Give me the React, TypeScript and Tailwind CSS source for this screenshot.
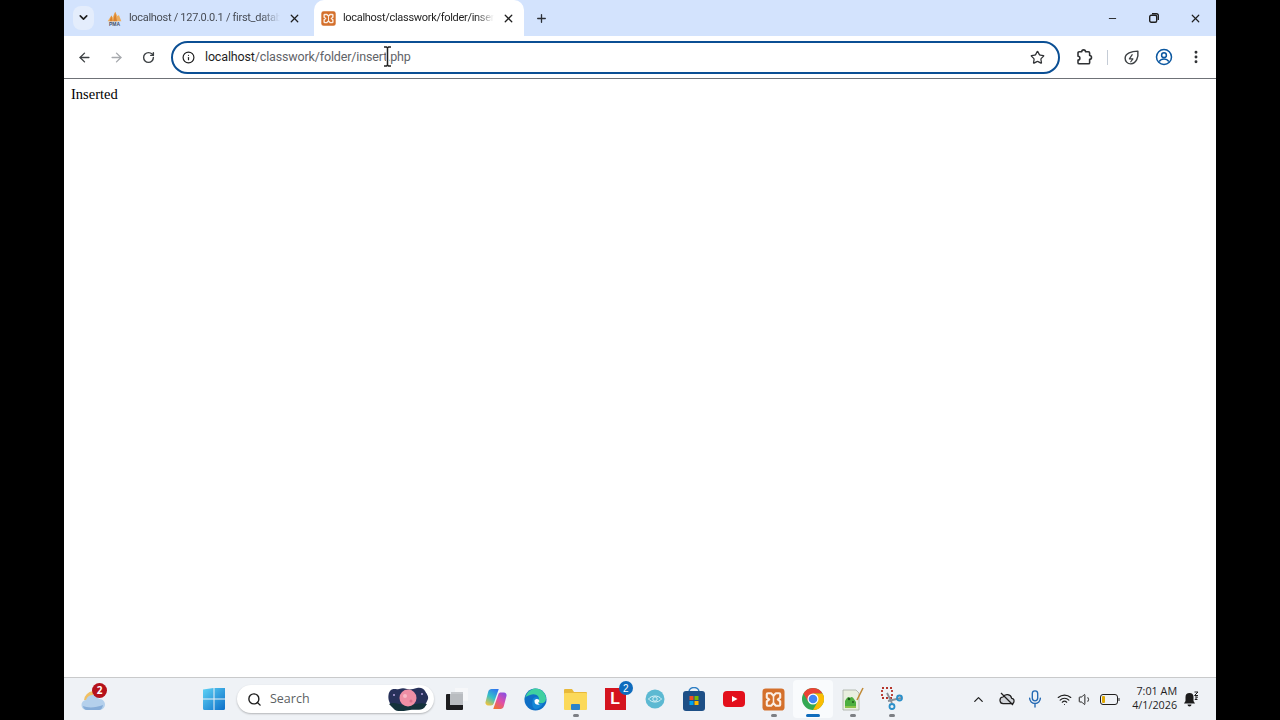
import { ArrowLeft, ArrowRight, ChevronDown, ChevronUp, Info, Minus, MoreVertical, Plus, RotateCw, Search, Star, Volume1, Wifi, X } from 'lucide-react';
import type { ReactNode } from 'react';

const sans = 'font-["Open_Sans","Noto_Sans",sans-serif]';

function XamppIcon({ size = 15 }: { size?: number }) {
  return (
    <svg width={size} height={size} viewBox="0 0 24 24">
      <rect x="0.500" y="0.500" width="23" height="23" rx="3.500" fill="#d4702c" />
      <path d="M6 5.500h3.500L12 8l2.500-2.500H18a1 1 0 0 1 1 1V10l-2.500 2 2.500 2v3.500a1 1 0 0 1-1 1h-3.500L12 16l-2.500 2.500H6a1 1 0 0 1-1-1V14l2.500-2L5 10V6.500a1 1 0 0 1 1-1z" fill="none" stroke="#fbeee4" strokeWidth="2.200" strokeLinejoin="round" />
      <path d="M12 8v8" stroke="#fbeee4" strokeWidth="1.600" />
    </svg>
  );
}

function PmaIcon() {
  return (
    <svg width="16" height="16" viewBox="0 0 24 24">
      <path d="M1 17 7 8l2 3 4-9 4 7 2-2 4 10z" fill="#ecae62" />
      <path d="M7 8l2 9H4zM13 2l3 15h-6z" fill="#d9822f" />
      <text x="12" y="24" textAnchor="middle" fontSize="8" fontWeight="700" fill="#45506a" fontFamily="Liberation Sans, sans-serif">PMA</text>
    </svg>
  );
}

function Tab({ icon, title, active }: { icon: ReactNode; title: string; active?: boolean }) {
  return (
    <div className={`flex h-[36px] w-[210px] shrink-0 items-center pl-[7px] pr-[8px] ${active ? 'rounded-t-[10px] bg-white text-[#1f1f1f]' : 'text-[#474c55]'}`}>
      <span className="flex w-[15px] shrink-0 items-center justify-center">{icon}</span>
      <span className="ml-[7px] w-[151px] overflow-hidden whitespace-nowrap font-['Roboto',sans-serif] text-[11px] tracking-[-0.3px] [mask-image:linear-gradient(to_right,black_88%,transparent)]">{title}</span>
      <X className="ml-[8px] h-[13px] w-[13px] text-[#1f1f1f]" strokeWidth={2.4} />
    </div>
  );
}

function Leaf() {
  return (
    <svg width="17" height="17" viewBox="0 0 24 24" fill="none" stroke="#3c4043" strokeWidth="2" strokeLinejoin="round" strokeLinecap="round">
      <path d="M21 3c1 9-2 17-10 18-5 0-8-4-8-8C3 6 12 3 21 3z" />
      <path d="M13 8l-4 6h5l-3 4" strokeWidth="1.700" />
    </svg>
  );
}

function Puzzle() {
  return (
    <svg width="18" height="18" viewBox="0 0 24 24" fill="none" stroke="#2f3134" strokeWidth="2.100" strokeLinejoin="round">
      <path d="M9 5a2.500 2.500 0 0 1 5 0h4a1.500 1.500 0 0 1 1.500 1.500V10a2.500 2.500 0 0 1 0 5v4.500A1.500 1.500 0 0 1 18 21H5.500A1.500 1.500 0 0 1 4 19.500V16a2.500 2.500 0 0 0 0-5V6.500A1.500 1.500 0 0 1 5.500 5z" />
    </svg>
  );
}

function Profile() {
  return (
    <svg width="18" height="18" viewBox="0 0 24 24" fill="none" stroke="#0b57a0" strokeWidth="2">
      <circle cx="12" cy="12" r="10" />
      <circle cx="12" cy="9.500" r="3.200" />
      <path d="M5.500 18c2-3 4-3.500 6.500-3.500s4.500.5 6.500 3.500" />
    </svg>
  );
}

function Cursor() {
  return (
    <svg className="absolute left-[210px] top-[3px]" width="9" height="21" viewBox="0 0 9 21" fill="none">
      <path d="M1 1h2.500L4.500 2l1-1H8M4.500 2v17M1 20h2.500l1-1 1 1H8" stroke="#fff" strokeWidth="3" />
      <path d="M1 1h2.500L4.500 2l1-1H8M4.500 2v17M1 20h2.500l1-1 1 1H8" stroke="#222" strokeWidth="1.500" />
    </svg>
  );
}

function Weather() {
  return (
    <div className="relative h-[30px] w-[30px]">
      <svg width="30" height="30" viewBox="0 0 30 30">
        <path d="M15 7a11 11 0 0 0-9 9 8 8 0 0 0 9-4z" fill="#f0c064" />
        <path d="M9 26a5 5 0 0 1-1-10 7 7 0 0 1 13-1 5.500 5.500 0 0 1 1 11z" fill="#b4d0ec" />
        <path d="M5 22c4 2 13 2 20-1-.5 3-2 5-4 5H9c-2 0-4-2-4-4z" fill="#85acd8" />
      </svg>
      <span className={`absolute left-[14px] top-[-1px] flex h-[15px] w-[15px] items-center justify-center rounded-full bg-[#b5121b] text-[10px] font-bold text-white ${sans}`}>2</span>
    </div>
  );
}

function StartIcon() {
  return (
    <svg width="22" height="22" viewBox="0 0 22 22">
      <defs>
        <linearGradient id="win" x1="0" y1="0" x2="1" y2="1">
          <stop offset="0" stopColor="#5fd3f5" />
          <stop offset="1" stopColor="#0c6fc9" />
        </linearGradient>
      </defs>
      <path d="M0 1.500 10.500 0v10.500H0zM11.500 0H22v10.500H11.500zM0 11.500h10.500V22H1.500A1.500 1.500 0 0 1 0 20.500zM11.500 11.500H22V20.500a1.500 1.500 0 0 1-1.500 1.500h-9z" fill="url(#win)" />
    </svg>
  );
}

function MoonBadge() {
  return (
    <svg width="42" height="24" viewBox="0 0 42 24">
      <path d="M4 3c3-2 5 0 8-1s5-1 8 0 6 0 10-1 7 1 8 3 4 5 3 8-3 5-3 7-4 3-8 2-8 1-12 0-8 2-11 0-4-4-5-7-1-9 2-11z" fill="#27315a" />
      <path d="M2 17c6-3 11 2 19 1s13-3 19-1l-3 4c-4 3-9 1-14 2s-11 2-15 0z" fill="#14323b" />
      <circle cx="21" cy="11" r="8.500" fill="#ef8fa5" />
      <circle cx="18" cy="9" r="2" fill="#f8b9c6" />
      <circle cx="24" cy="14" r="1.500" fill="#d96f8c" />
      <circle cx="7" cy="8" r="1" fill="#b7a5e0" />
      <circle cx="35" cy="7" r="1" fill="#b7a5e0" />
    </svg>
  );
}

function DarkSquares() {
  return (
    <svg width="22" height="22" viewBox="0 0 22 22">
      <rect x="9" y="0" width="13" height="13" fill="#f6f7f9" />
      <rect x="5" y="4" width="12" height="12" fill="#c5c8cc" />
      <rect x="0" y="6" width="17" height="16" rx="1" fill="#1d1d1f" />
      <rect x="4" y="6" width="13" height="11" fill="#b9bcc0" />
    </svg>
  );
}

function Copilot() {
  return (
    <svg width="22" height="22" viewBox="0 0 24 24">
      <defs>
        <linearGradient id="cpA" x1="0.700" y1="0" x2="0.200" y2="1">
          <stop offset="0" stopColor="#2f78ee" />
          <stop offset="0.500" stopColor="#35c1c8" />
          <stop offset="1" stopColor="#f2c33a" />
        </linearGradient>
        <linearGradient id="cpB" x1="0.800" y1="0" x2="0.200" y2="1">
          <stop offset="0" stopColor="#8b4fe0" />
          <stop offset="0.500" stopColor="#e04fa8" />
          <stop offset="1" stopColor="#f0752f" />
        </linearGradient>
      </defs>
      <path d="M7 1h8L9.500 17c-.5 1.500-1.500 2-3 2H3.500c-2 0-3.500-2-3-3.500L3.500 4C4 2 5.500 1 7 1z" fill="url(#cpA)" />
      <path d="M17 23H9l5.500-16c.5-1.500 1.500-2 3-2h3c2 0 3.500 2 3 3.500L20.500 20C20 22 18.500 23 17 23z" fill="url(#cpB)" />
    </svg>
  );
}

function Edge() {
  return (
    <svg width="23" height="23" viewBox="0 0 24 24">
      <circle cx="12" cy="12" r="11.500" fill="#0f6fc6" />
      <path d="M1 11C3 3 9 .5 12 .5c6 0 11 5 11 10.500 0 3-2 5-5 5-2 0-4-1-4-2 2-1 2-3 1-5-2-3-6-3-8-2-3 1-5 2-7 4z" fill="#3fd0a0" />
      <path d="M9 13c0-2 2-4 5-3 2 1 2 3 0 4 0 2 3 3 6 2-2 4-5 6-8 6-3-1-4-5-3-9z" fill="#1688d8" />
      <path d="M12 12c2-1 4 0 4 2-2 1-1 3 1 3-3 1-6 0-6-3 0-1 0-2 1-2z" fill="#fff" />
    </svg>
  );
}

function Explorer() {
  return (
    <svg width="23" height="22" viewBox="0 0 23 22">
      <path d="M0 2a1 1 0 0 1 1-1h7l2 3h12a1 1 0 0 1 1 1v3H0z" fill="#e8b93a" />
      <rect x="0" y="5" width="23" height="17" rx="1" fill="#fbd95a" />
      <rect x="7" y="16" width="9" height="6" rx="1" fill="#2b83c9" />
    </svg>
  );
}

function LIcon() {
  return (
    <div className="relative flex h-[22px] w-[21px] items-center justify-center bg-[#d4141f] font-['Liberation_Sans',sans-serif] text-[16px] font-bold text-white">
      L
      <span className="absolute -right-[7px] -top-[7px] flex h-[14px] w-[14px] items-center justify-center rounded-full bg-[#0f6cbd] text-[10px] font-normal">2</span>
    </div>
  );
}

function EyeCircle() {
  return (
    <svg width="20" height="20" viewBox="0 0 20 20" fill="none">
      <circle cx="10" cy="10" r="9.500" fill="#5cb9d2" />
      <path d="M3.500 10c3-4 10-4 13 0-3 4-10 4-13 0z" stroke="#d9f2f7" strokeWidth="1" />
      <circle cx="10" cy="10" r="2.200" stroke="#d9f2f7" strokeWidth="1" />
    </svg>
  );
}

function Store() {
  return (
    <svg width="22" height="24" viewBox="0 0 22 24">
      <path d="M6 5c0-6 10-6 10 0" fill="none" stroke="#2f7fc4" strokeWidth="1.500" />
      <rect x="0" y="4" width="22" height="20" rx="3" fill="#1d4f86" />
      <rect x="6.500" y="9" width="4" height="4" fill="#f25022" />
      <rect x="11.500" y="9" width="4" height="4" fill="#7fba00" />
      <rect x="6.500" y="14" width="4" height="4" fill="#00a4ef" />
      <rect x="11.500" y="14" width="4" height="4" fill="#ffb900" />
    </svg>
  );
}

function Youtube() {
  return (
    <svg width="22" height="16" viewBox="0 0 22 16">
      <rect width="22" height="16" rx="4" fill="#e3101c" />
      <path d="M9 5l5.500 3L9 11z" fill="#fff" />
    </svg>
  );
}

function Chrome() {
  return (
    <svg width="22" height="22" viewBox="0 0 22 22">
      <circle cx="11" cy="11" r="11" fill="#34a853" />
      <path d="M1.470 5.500A11 11 0 0 1 20.530 5.500H11L6.240 13.750z" fill="#ea4335" />
      <path d="M20.530 5.500A11 11 0 0 1 11 22L15.760 13.750 11 5.500z" fill="#fbbc04" />
      <circle cx="11" cy="11" r="5.500" fill="#fff" />
      <circle cx="11" cy="11" r="4.300" fill="#4285f4" />
    </svg>
  );
}

function Notepad() {
  return (
    <svg width="22" height="24" viewBox="0 0 22 24">
      <path d="M1 3h13l3 3v17H1z" fill="#e9efdf" stroke="#a7ada4" strokeWidth="0.800" />
      <path d="M3 14c2-4 4-5 5-3 1-2 3-1 4 1l2 3v4H3z" fill="#4caf3f" />
      <circle cx="7" cy="12" r="1.300" fill="#1d5c1b" />
      <circle cx="11" cy="15" r="1" fill="#1d5c1b" />
      <path d="M3 19h11v2H3z" fill="#8bc34a" />
      <path d="M21 1l-6 12" stroke="#c08a35" strokeWidth="1.600" />
    </svg>
  );
}

function Snip() {
  return (
    <svg width="22" height="24" viewBox="0 0 22 24" fill="none">
      <rect x="1" y="1" width="10" height="10" stroke="#b5342a" strokeWidth="1.800" strokeDasharray="2 2" />
      <path d="M6 6l5 10M20 11 7 14" stroke="#8a8f96" strokeWidth="1.800" />
      <circle cx="18.500" cy="11" r="2.500" stroke="#2b8fc9" strokeWidth="1.800" />
      <circle cx="11" cy="19.500" r="2.500" stroke="#2b8fc9" strokeWidth="1.800" />
    </svg>
  );
}

function BatteryIcon() {
  return (
    <svg width="20" height="11" viewBox="0 0 20 11" fill="none">
      <rect x="0.500" y="0.500" width="17" height="10" rx="2.500" stroke="#1f1f1f" />
      <rect x="2" y="2" width="3" height="7" rx="1" fill="#e0a800" />
      <path d="M19 4v3" stroke="#1f1f1f" />
    </svg>
  );
}

function NoSync() {
  return (
    <svg width="16" height="16" viewBox="0 0 24 24" fill="none" stroke="#1f1f1f" strokeWidth="1.800">
      <path d="M7 19a5 5 0 0 1-1-10 7 7 0 0 1 13 2 4 4 0 0 1-1 8z" fill="#9b9ea3" fillOpacity="0.350" />
      <path d="M3 3l18 18" />
    </svg>
  );
}

function Mic() {
  return (
    <svg width="16" height="18" viewBox="0 0 16 20" fill="none" stroke="#2469b3" strokeWidth="1.500" strokeLinecap="round">
      <rect x="5" y="1" width="6" height="11" rx="3" />
      <path d="M2 9a6 6 0 0 0 12 0M8 15v4" />
    </svg>
  );
}

function BellDnd() {
  return (
    <svg width="16" height="16" viewBox="0 0 16 16">
      <path d="M6.500 2a4 4 0 0 0-4 4v4L1 12.500h11L10.500 10V6a4 4 0 0 0-4-4z" fill="#1c1c1c" />
      <path d="M4.500 13.500a2 2 0 0 0 4 0z" fill="#1c1c1c" />
      <path d="M11.500 1h3.500l-3.500 3.500H15M12 6h2.500L12 8.500h2.500" fill="none" stroke="#1c1c1c" strokeWidth="1" />
    </svg>
  );
}

function Slot({ children, dot, active }: { children: ReactNode; dot?: boolean; active?: boolean }) {
  return (
    <div className={`relative flex h-[38px] w-[39.6px] shrink-0 items-center justify-center rounded-[4px] ${active ? 'bg-[#f9fbfd]' : ''}`}>
      {children}
      {dot && !active && <span className="absolute bottom-[1px] h-[3px] w-[6px] rounded-full bg-[#7c7f84]" />}
      {active && <span className="absolute bottom-[1px] h-[3px] w-[14px] rounded-full bg-[#0f6cbd]" />}
    </div>
  );
}

export default function App() {
  return (
    <div className="flex h-[720px] w-[1280px] overflow-hidden bg-black">
      <div className="ml-[64px] flex h-full w-[1152px] flex-col bg-white">
        <div className={`flex h-[36px] shrink-0 items-center bg-[#d3e3fd] ${sans}`}>
          <div className="ml-[9px] mt-[-1px] flex h-[24px] w-[21px] items-center justify-center rounded-[8px] bg-[#e4edfc]">
            <ChevronDown className="h-[13px] w-[13px] text-[#1f1f1f]" strokeWidth={3} />
          </div>
          <div className="ml-[6px] flex">
            <Tab icon={<PmaIcon />} title="localhost / 127.0.0.1 / first_database" />
            <div className="w-[4px]" />
            <Tab icon={<XamppIcon />} title="localhost/classwork/folder/insert.php" active />
          </div>
          <Plus className="ml-[11px] h-[13px] w-[13px] text-[#2b2f36]" strokeWidth={2.4} />
          <div className="ml-auto flex items-center text-[#1f1f1f]">
            <Minus className="mr-[31px] h-[11px] w-[11px]" strokeWidth={2} />
            <svg className="mr-[30px]" width="10" height="10" viewBox="0 0 10 10" fill="none" stroke="#1f1f1f" strokeWidth="1.400">
              <rect x="0.700" y="2.300" width="7" height="7" rx="1.500" />
              <path d="M3 .7h4.500a1.800 1.800 0 0 1 1.800 1.800V7" />
            </svg>
            <X className="mr-[14px] h-[13px] w-[13px]" strokeWidth={2.2} />
          </div>
        </div>

        <div className="flex h-[43px] shrink-0 items-center border-b-[1.5px] border-[#6f7277] bg-white">
          <ArrowLeft className="ml-[13px] h-[15px] w-[15px] text-[#3c4043]" strokeWidth={2.2} />
          <ArrowRight className="ml-[17px] h-[15px] w-[15px] text-[#a6a9ad]" strokeWidth={2.2} />
          <RotateCw className="ml-[18px] h-[13px] w-[13px] text-[#3c4043]" strokeWidth={2.6} />
          <div className="relative ml-[16px] flex h-[33px] w-[889px] items-center rounded-full border-2 border-[#0b4f94] bg-white pl-[9px] pr-[13px]">
            <Info className="h-[13px] w-[13px] text-[#1f1f1f]" strokeWidth={2.2} />
            <span className="ml-[10px] font-['Roboto',sans-serif] text-[12.500px] tracking-[-0.15px] text-[#5f6368]">
              <span className="text-[#1f1f1f]">localhost</span>/classwork/folder/insert.php
            </span>
            <Cursor />
            <Star className="ml-auto h-[15px] w-[15px] text-[#2f3134]" strokeWidth={2} />
          </div>
          <div className="ml-[15px] flex h-[18px] w-[18px] items-center justify-center"><Puzzle /></div>
          <div className="ml-[14px] h-[15px] w-[1px] bg-[#c5ccd6]" />
          <div className="ml-[15px]"><Leaf /></div>
          <div className="ml-[15px]"><Profile /></div>
          <MoreVertical className="ml-[15px] h-[16px] w-[16px] text-[#2f3134]" strokeWidth={2.4} />
        </div>

        <div className="flex-1 bg-white pl-[7px] pt-[6px] font-['Liberation_Serif',serif] text-[14.500px] leading-[18px] text-black">Inserted</div>

        <div className={`flex h-[43px] shrink-0 items-center border-t-[1.5px] border-[#c9cacb] bg-[#eff2f6] ${sans}`}>
          <div className="ml-[14px]"><Weather /></div>
          <div className="ml-[95px]"><StartIcon /></div>
          <div className="ml-[12px] flex h-[28px] w-[197px] items-center rounded-full bg-white pl-[10px] pr-[5px] shadow-[0_1px_2px_rgba(0,0,0,0.25)]">
            <Search className="h-[15px] w-[15px] text-[#1c1c1c]" strokeWidth={2.2} />
            <span className="ml-[8px] text-[12.500px] text-[#5c5f63]">Search</span>
            <div className="ml-auto"><MoonBadge /></div>
          </div>
          <div className="ml-[3px] flex items-center">
            <Slot><DarkSquares /></Slot>
            <Slot><Copilot /></Slot>
            <Slot><Edge /></Slot>
            <Slot dot><Explorer /></Slot>
            <Slot><LIcon /></Slot>
            <Slot><EyeCircle /></Slot>
            <Slot><Store /></Slot>
            <Slot><Youtube /></Slot>
            <Slot dot><XamppIcon size={23} /></Slot>
            <Slot active><Chrome /></Slot>
            <Slot dot><Notepad /></Slot>
            <Slot dot><Snip /></Slot>
          </div>
          <ChevronUp className="ml-[59px] h-[15px] w-[15px] text-[#1f1f1f]" strokeWidth={2} />
          <div className="ml-[13px]"><NoSync /></div>
          <div className="ml-[12px]"><Mic /></div>
          <Wifi className="ml-[14px] h-[15px] w-[15px] text-[#1f1f1f]" strokeWidth={1.8} />
          <Volume1 className="ml-[6px] h-[15px] w-[15px] text-[#1f1f1f]" strokeWidth={1.6} />
          <div className="ml-[7px]"><BatteryIcon /></div>
          <div className="mb-[2px] ml-[9px] flex w-[48px] flex-col items-end text-[10.800px] leading-[14px] text-[#1f1f1f]">
            <span>7:01 AM</span>
            <span>4/1/2026</span>
          </div>
          <div className="ml-[6px]"><BellDnd /></div>
        </div>
      </div>
    </div>
  );
}
